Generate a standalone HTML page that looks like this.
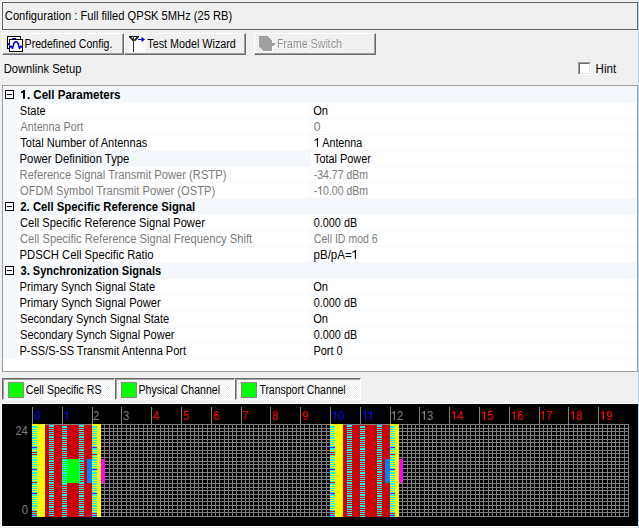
<!DOCTYPE html><html><head><meta charset="utf-8"><title>Downlink Setup</title><style>

html,body{margin:0;padding:0;background:#f0f0f0;overflow:hidden}
#r{position:relative;width:639px;height:528px;background:#f0f0f0;overflow:hidden;font-family:"Liberation Sans",sans-serif;font-size:12px;line-height:14px;color:#000}
#r div,#r span,#r svg{position:absolute;box-sizing:border-box}
.t{white-space:pre;transform-origin:0 0;height:14px}
.b{font-weight:bold}
.dis{text-shadow:1px 1px 0 #fff;will-change:transform}
.cl{letter-spacing:-0.22px}
.o{display:inline-block;width:6.67px;height:9px;background:currentColor;clip-path:polygon(3.3px 0,4.6px 0,4.6px 9px,3.3px 9px,3.3px 2.1px,0.7px 2.9px,0.7px 1.8px,3.3px 0.9px)}
.ob{clip-path:polygon(2.5px 0,4.6px 0,4.6px 9px,2.5px 9px,2.5px 2.8px,0.4px 3.4px,0.4px 1.8px,2.5px 0.9px)}
.o6{width:6.45px;clip-path:polygon(3px 0,4.3px 0,4.3px 9px,3px 9px,3px 2.1px,0.5px 2.9px,0.5px 1.8px,3px 0.9px)}
.btn{border-top:1px solid #fff;border-left:1px solid #fff;border-right:1px solid #696969;border-bottom:1px solid #696969;background:#f0f0f0}
.btn:after{content:"";position:absolute;left:0;top:0;right:0;bottom:0;border-right:1px solid #a0a0a0;border-bottom:1px solid #a0a0a0}
.tab{border-top:1px solid #696969;border-left:1px solid #696969;border-right:1px solid #fff;border-bottom:1px solid #fff;background:repeating-conic-gradient(#fff 0 25%,#f0f0f0 0 50%) 0 0/2px 2px}
.tab:after{content:"";position:absolute;left:0;top:0;right:0;bottom:0;border-top:1px solid #a0a0a0;border-left:1px solid #a0a0a0}
.sw{background:#00ff00;border:1px solid #908490;width:16px;height:16px}
.pm{width:9px;height:9px;border:1px solid #000;background:#fff}
.pm:after{content:"";position:absolute;left:1px;top:3px;width:5px;height:1px;background:#000}

</style></head><body><div id="r">
<div style="left:638px;top:0;width:1px;height:528px;background:#b9d3ee"></div>
<div style="left:2px;top:2px;width:636px;height:28px;border:1px solid #646464"></div>
<div class="btn" style="left:2px;top:33px;width:122px;height:22px"></div>
<div class="btn" style="left:124px;top:33px;width:122px;height:22px"></div>
<div class="btn" style="left:254px;top:33px;width:122px;height:22px"></div>
<svg style="left:6px;top:35px" width="18" height="18" viewBox="6 35 18 18" shape-rendering="crispEdges">
<rect x="7.5" y="36.5" width="13" height="12" fill="#fff" stroke="#000"/>
<path d="M12 38.5h4M8.5 43v2" stroke="#00f" stroke-width="1" fill="none"/>
<rect x="9.5" y="39.5" width="13" height="12" fill="#fff" stroke="#000"/>
<path d="M10.3 47.5L11.2 46.2L12.4 48.4L13.4 45.5L14 43Q16 40.6 18 43L18.6 45.5L19.6 48.4L20.8 46.2L21.7 47.5" stroke="#00f" stroke-width="1.6" fill="none" shape-rendering="auto" stroke-linejoin="round"/>
</svg>
<svg style="left:129px;top:36px" width="16" height="16" viewBox="129 36 16 16">
<rect x="129" y="36" width="16" height="16" fill="#fff"/>
<path d="M129 36.5h10" stroke="#000" stroke-width="1" shape-rendering="crispEdges"/>
<path d="M129.5 36.5l4 4.2M138.5 36.5l-4 4.2" stroke="#111" stroke-width="1.7" fill="none"/>
<path d="M133.5 36v16" stroke="#333" stroke-width="1" shape-rendering="crispEdges"/>
<path d="M138 39.5h6" stroke="#00f" stroke-width="1" shape-rendering="crispEdges"/>
<path d="M141.5 36.8l3.6 2.7l-3.6 2.7z" fill="#00f"/>
</svg>
<svg style="left:258px;top:35px" width="20" height="18" viewBox="258 35 20 18" shape-rendering="crispEdges">
<path d="M259 36h9v1h1v1h1v1h1v1h1v3h3v2h-1v1h-2v5h-9v-1h-1v-1h-1v-1h-1v-1h-1z" fill="#fff" transform="translate(1,1)"/>
<path d="M259 36h9v1h1v1h1v1h1v1h1v3h3v2h-1v1h-2v5h-9v-1h-1v-1h-1v-1h-1v-1h-1z" fill="#a0a0a0"/>
</svg>
<div style="left:578px;top:62px;width:13px;height:13px;background:#fff;border-top:1px solid #a0a0a0;border-left:1px solid #a0a0a0;border-right:1px solid #fff;border-bottom:1px solid #fff"></div>
<div style="left:579px;top:63px;width:11px;height:11px;border-top:1px solid #696969;border-left:1px solid #696969;border-right:1px solid #e3e3e3;border-bottom:1px solid #e3e3e3"></div>
<div style="left:2px;top:85px;width:636px;height:287px;border:1px solid #a0a0a0;background:#fff"></div>
<div style="left:3px;top:86px;width:14px;height:273px;background:#f4f7fc"></div>
<div style="left:3px;top:86px;width:634px;height:17px;background:#f4f7fc"></div>
<div class="pm" style="left:5px;top:90px"></div>
<div style="left:17px;top:102px;width:620px;height:1px;background:#f4f7fc"></div>
<div style="left:17px;top:118px;width:620px;height:1px;background:#f4f7fc"></div>
<div style="left:17px;top:134px;width:620px;height:1px;background:#f4f7fc"></div>
<div style="left:17px;top:150px;width:620px;height:1px;background:#f4f7fc"></div>
<div style="left:17px;top:150px;width:294px;height:17px;background:#f4f7fc"></div>
<div style="left:17px;top:166px;width:620px;height:1px;background:#f4f7fc"></div>
<div style="left:17px;top:182px;width:620px;height:1px;background:#f4f7fc"></div>
<div style="left:17px;top:198px;width:620px;height:1px;background:#f4f7fc"></div>
<div style="left:3px;top:198px;width:634px;height:17px;background:#f4f7fc"></div>
<div class="pm" style="left:5px;top:202px"></div>
<div style="left:17px;top:214px;width:620px;height:1px;background:#f4f7fc"></div>
<div style="left:17px;top:230px;width:620px;height:1px;background:#f4f7fc"></div>
<div style="left:17px;top:246px;width:620px;height:1px;background:#f4f7fc"></div>
<div style="left:17px;top:262px;width:620px;height:1px;background:#f4f7fc"></div>
<div style="left:3px;top:262px;width:634px;height:17px;background:#f4f7fc"></div>
<div class="pm" style="left:5px;top:266px"></div>
<div style="left:17px;top:278px;width:620px;height:1px;background:#f4f7fc"></div>
<div style="left:17px;top:294px;width:620px;height:1px;background:#f4f7fc"></div>
<div style="left:17px;top:310px;width:620px;height:1px;background:#f4f7fc"></div>
<div style="left:17px;top:326px;width:620px;height:1px;background:#f4f7fc"></div>
<div style="left:17px;top:342px;width:620px;height:1px;background:#f4f7fc"></div>
<div style="left:17px;top:358px;width:620px;height:1px;background:#f4f7fc"></div>
<div style="left:310px;top:86px;width:1px;height:273px;background:#f4f7fc"></div>
<div class="tab" style="left:2px;top:378px;width:113px;height:22px"></div>
<div class="tab" style="left:115px;top:378px;width:120px;height:22px"></div>
<div class="tab" style="left:235px;top:378px;width:126px;height:22px"></div>
<div style="left:1px;top:403px;width:637px;height:124px;background:#fff"></div>
<div class="sw" style="left:8px;top:382px"></div>
<div class="sw" style="left:121px;top:382px"></div>
<div class="sw" style="left:241px;top:382px"></div>
<span class="t" style="left:4px;top:8.84px;transform:translateX(0.84px) scaleX(0.9290)">Configuration : Full filled QPSK 5MHz (25 RB)</span>
<span class="t" style="left:24px;top:36.84px;transform:translateX(0.62px) scaleX(0.8823)">Predefined Config.</span>
<span class="t" style="left:147px;top:36.84px;transform:translateX(0.28px) scaleX(0.8972)">Test Model Wizard</span>
<span class="t dis" style="left:276px;top:36.84px;transform:translateX(0.91px) scaleX(0.8864);color:#8c8c8c">Frame Switch</span>
<span class="t" style="left:3px;top:61.84px;transform:translateX(0.77px) scaleX(0.9305)">Downlink Setup</span>
<span class="t" style="left:595px;top:61.84px;transform:translateX(0.54px) scaleX(0.9630)">Hint</span>
<span class="t b" style="left:20px;top:87.84px;transform:translateX(0.56px) scaleX(0.9608)"><i class="o ob"></i>. Cell Parameters</span>
<span class="t" style="left:19px;top:103.84px;transform:translateX(0.84px) scaleX(0.9185)">State</span>
<span class="t" style="left:313px;top:103.84px;transform:translateX(0.14px) scaleX(0.9288)">On</span>
<span class="t" style="left:20px;top:119.84px;transform:translateX(0.50px) scaleX(0.8957);color:#7b7b7b">Antenna Port</span>
<span class="t" style="left:313px;top:119.84px;transform:translateX(0.70px) scaleX(1.0087);color:#7b7b7b">0</span>
<span class="t" style="left:20px;top:135.84px;transform:translateX(0.27px) scaleX(0.9200)">Total Number of Antennas</span>
<span class="t" style="left:313px;top:135.84px;transform:translateX(0.93px) scaleX(0.8939)"><i class="o"></i> Antenna</span>
<span class="t" style="left:19px;top:151.84px;transform:translateX(0.56px) scaleX(0.9426)">Power Definition Type</span>
<span class="t" style="left:314px;top:151.84px;transform:translateX(0.07px) scaleX(0.9060)">Total Power</span>
<span class="t" style="left:19px;top:167.84px;transform:translateX(0.57px) scaleX(0.9312);color:#7b7b7b">Reference Signal Transmit Power (RSTP)</span>
<span class="t" style="left:313px;top:167.84px;transform:translateX(0.76px) scaleX(0.8741);color:#7b7b7b">-34.77 dBm</span>
<span class="t" style="left:20px;top:183.84px;transform:translateX(0.03px) scaleX(0.9321);color:#7b7b7b">OFDM Symbol Transmit Power (OSTP)</span>
<span class="t" style="left:313px;top:183.84px;transform:translateX(0.76px) scaleX(0.8741);color:#7b7b7b">-<i class="o"></i>0.00 dBm</span>
<span class="t b" style="left:20px;top:199.84px;transform:translateX(0.33px) scaleX(0.9429)">2. Cell Specific Reference Signal</span>
<span class="t" style="left:20px;top:215.84px;transform:translateX(0.04px) scaleX(0.9298)">Cell Specific Reference Signal Power</span>
<span class="t" style="left:313px;top:215.84px;transform:translateX(0.75px) scaleX(0.9043)">0.000 dB</span>
<span class="t" style="left:20px;top:231.84px;transform:translateX(0.03px) scaleX(0.9333);color:#7b7b7b">Cell Specific Reference Signal Frequency Shift</span>
<span class="t" style="left:313px;top:231.84px;transform:translateX(0.86px) scaleX(0.8780);color:#7b7b7b">Cell ID mod 6</span>
<span class="t" style="left:19px;top:247.84px;transform:translateX(0.56px) scaleX(0.9381)">PDSCH Cell Specific Ratio</span>
<span class="t" style="left:313px;top:247.84px;transform:translateX(0.58px) scaleX(0.9586)">pB/pA=<i class="o"></i></span>
<span class="t b" style="left:20px;top:263.84px;transform:translateX(0.57px) scaleX(0.9204)">3. Synchronization Signals</span>
<span class="t" style="left:19px;top:279.84px;transform:translateX(0.57px) scaleX(0.9280)">Primary Synch Signal State</span>
<span class="t" style="left:313px;top:279.84px;transform:translateX(0.14px) scaleX(0.9288)">On</span>
<span class="t" style="left:19px;top:295.84px;transform:translateX(0.57px) scaleX(0.9285)">Primary Synch Signal Power</span>
<span class="t" style="left:313px;top:295.84px;transform:translateX(0.75px) scaleX(0.9043)">0.000 dB</span>
<span class="t" style="left:20px;top:311.84px;transform:translateX(0.04px) scaleX(0.9203)">Secondary Synch Signal State</span>
<span class="t" style="left:313px;top:311.84px;transform:translateX(0.14px) scaleX(0.9288)">On</span>
<span class="t" style="left:20px;top:327.84px;transform:translateX(0.04px) scaleX(0.9188)">Secondary Synch Signal Power</span>
<span class="t" style="left:313px;top:327.84px;transform:translateX(0.75px) scaleX(0.9043)">0.000 dB</span>
<span class="t" style="left:19px;top:343.84px;transform:translateX(0.48px) scaleX(0.9182)">P-SS/S-SS Transmit Antenna Port</span>
<span class="t" style="left:313px;top:343.84px;transform:translateX(0.39px) scaleX(0.9148)">Port 0</span>
<span class="t" style="left:25px;top:382.84px;transform:translateX(0.76px) scaleX(0.8800)">Cell Specific RS</span>
<span class="t" style="left:138px;top:382.84px;transform:translateX(0.52px) scaleX(0.8791)">Physical Channel</span>
<span class="t" style="left:259px;top:382.84px;transform:translateX(0.38px) scaleX(0.8724)">Transport Channel</span>
<svg style="left:2px;top:404px" width="636" height="122" viewBox="2 404 636 122" shape-rendering="crispEdges"><rect x="2" y="404" width="636" height="122" fill="#000"/><path d="M32.5 424v93M36.5 424v93M41.5 424v93M45.5 424v93M49.5 424v93M53.5 424v93M58.5 424v93M62.5 424v93M66.5 424v93M70.5 424v93M75.5 424v93M79.5 424v93M83.5 424v93M87.5 424v93M92.5 424v93M96.5 424v93M100.5 424v93M104.5 424v93M109.5 424v93M113.5 424v93M117.5 424v93M121.5 424v93M126.5 424v93M130.5 424v93M134.5 424v93M138.5 424v93M143.5 424v93M147.5 424v93M151.5 424v93M155.5 424v93M160.5 424v93M164.5 424v93M168.5 424v93M172.5 424v93M177.5 424v93M181.5 424v93M185.5 424v93M190.5 424v93M194.5 424v93M198.5 424v93M202.5 424v93M207.5 424v93M211.5 424v93M215.5 424v93M219.5 424v93M224.5 424v93M228.5 424v93M232.5 424v93M236.5 424v93M241.5 424v93M245.5 424v93M249.5 424v93M253.5 424v93M258.5 424v93M262.5 424v93M266.5 424v93M270.5 424v93M275.5 424v93M279.5 424v93M283.5 424v93M287.5 424v93M292.5 424v93M296.5 424v93M300.5 424v93M304.5 424v93M309.5 424v93M313.5 424v93M317.5 424v93M321.5 424v93M326.5 424v93M330.5 424v93M334.5 424v93M339.5 424v93M343.5 424v93M347.5 424v93M351.5 424v93M356.5 424v93M360.5 424v93M364.5 424v93M368.5 424v93M373.5 424v93M377.5 424v93M381.5 424v93M385.5 424v93M390.5 424v93M394.5 424v93M398.5 424v93M402.5 424v93M407.5 424v93M411.5 424v93M415.5 424v93M419.5 424v93M424.5 424v93M428.5 424v93M432.5 424v93M436.5 424v93M441.5 424v93M445.5 424v93M449.5 424v93M453.5 424v93M458.5 424v93M462.5 424v93M466.5 424v93M470.5 424v93M475.5 424v93M479.5 424v93M483.5 424v93M488.5 424v93M492.5 424v93M496.5 424v93M500.5 424v93M505.5 424v93M509.5 424v93M513.5 424v93M517.5 424v93M522.5 424v93M526.5 424v93M530.5 424v93M534.5 424v93M539.5 424v93M543.5 424v93M547.5 424v93M551.5 424v93M556.5 424v93M560.5 424v93M564.5 424v93M568.5 424v93M573.5 424v93M577.5 424v93M581.5 424v93M585.5 424v93M590.5 424v93M594.5 424v93M598.5 424v93M602.5 424v93M607.5 424v93M611.5 424v93M615.5 424v93M619.5 424v93M624.5 424v93M628.5 424v93M32 516.5h597M32 512.5h597M32 509.5h597M32 505.5h597M32 501.5h597M32 498.5h597M32 494.5h597M32 490.5h597M32 487.5h597M32 483.5h597M32 479.5h597M32 476.5h597M32 472.5h597M32 468.5h597M32 464.5h597M32 461.5h597M32 457.5h597M32 453.5h597M32 450.5h597M32 446.5h597M32 442.5h597M32 439.5h597M32 435.5h597M32 431.5h597M32 428.5h597M32 424.5h597M32.5 407v17M62.5 407v17M92.5 407v17M121.5 407v17M151.5 407v17M181.5 407v17M211.5 407v17M241.5 407v17M270.5 407v17M300.5 407v17M330.5 407v17M360.5 407v17M390.5 407v17M419.5 407v17M449.5 407v17M479.5 407v17M509.5 407v17M539.5 407v17M568.5 407v17M598.5 407v17" stroke="#808080" stroke-width="1" fill="none"/><rect x="32" y="424" width="13" height="93" fill="#ffff00"/><rect x="45" y="425" width="48" height="92" fill="#cc0000"/><rect x="62" y="459" width="18" height="24" fill="#00ff00"/><rect x="87" y="459" width="6" height="24" fill="#0080ff"/><rect x="100" y="459" width="5" height="24" fill="#ff00ff"/><rect x="92" y="424" width="9" height="93" fill="#ffff00"/><path d="M32 516.5h5M32 514.5h5M32 512.5h5M32 510.5h5M32 508.5h5M32 506.5h5M32 505.5h5M32 503.5h5M32 501.5h5M32 499.5h5M32 497.5h5M32 495.5h5M32 494.5h5M32 492.5h5M32 490.5h5M32 488.5h5M32 486.5h5M32 484.5h5M32 483.5h5M32 481.5h5M32 479.5h5M32 477.5h5M32 475.5h5M32 473.5h5M32 472.5h5M32 470.5h5M32 468.5h5M32 466.5h5M32 464.5h5M32 462.5h5M32 460.5h5M32 459.5h5M32 457.5h5M32 455.5h5M32 453.5h5M32 451.5h5M32 449.5h5M32 448.5h5M32 446.5h5M32 444.5h5M32 442.5h5M32 440.5h5M32 438.5h5M32 437.5h5M32 435.5h5M32 433.5h5M32 431.5h5M32 429.5h5M32 427.5h5M32 426.5h5" stroke="#00ffff" stroke-width="1" fill="none"/><path d="M49 515.5h5M49 513.5h5M49 511.5h5M49 509.5h5M49 507.5h5M49 506.5h5M49 504.5h5M49 502.5h5M49 500.5h5M49 498.5h5M49 496.5h5M49 495.5h5M49 493.5h5M49 491.5h5M49 489.5h5M49 487.5h5M49 485.5h5M49 483.5h5M49 482.5h5M49 480.5h5M49 478.5h5M49 476.5h5M49 474.5h5M49 472.5h5M49 471.5h5M49 469.5h5M49 467.5h5M49 465.5h5M49 463.5h5M49 461.5h5M49 460.5h5M49 458.5h5M49 456.5h5M49 454.5h5M49 452.5h5M49 450.5h5M49 449.5h5M49 447.5h5M49 445.5h5M49 443.5h5M49 441.5h5M49 439.5h5M49 437.5h5M49 436.5h5M49 434.5h5M49 432.5h5M49 430.5h5M49 428.5h5M49 426.5h5M49 425.5h5" stroke="#00ffff" stroke-width="1" fill="none"/><path d="M62 516.5h5M62 514.5h5M62 512.5h5M62 510.5h5M62 508.5h5M62 506.5h5M62 505.5h5M62 503.5h5M62 501.5h5M62 499.5h5M62 497.5h5M62 495.5h5M62 494.5h5M62 492.5h5M62 490.5h5M62 488.5h5M62 486.5h5M62 484.5h5M62 483.5h5M62 481.5h5M62 479.5h5M62 477.5h5M62 475.5h5M62 473.5h5M62 472.5h5M62 470.5h5M62 468.5h5M62 466.5h5M62 464.5h5M62 462.5h5M62 460.5h5M62 459.5h5M62 457.5h5M62 455.5h5M62 453.5h5M62 451.5h5M62 449.5h5M62 448.5h5M62 446.5h5M62 444.5h5M62 442.5h5M62 440.5h5M62 438.5h5M62 437.5h5M62 435.5h5M62 433.5h5M62 431.5h5M62 429.5h5M62 427.5h5M62 426.5h5" stroke="#00ffff" stroke-width="1" fill="none"/><path d="M79 515.5h5M79 513.5h5M79 511.5h5M79 509.5h5M79 507.5h5M79 506.5h5M79 504.5h5M79 502.5h5M79 500.5h5M79 498.5h5M79 496.5h5M79 495.5h5M79 493.5h5M79 491.5h5M79 489.5h5M79 487.5h5M79 485.5h5M79 483.5h5M79 482.5h5M79 480.5h5M79 478.5h5M79 476.5h5M79 474.5h5M79 472.5h5M79 471.5h5M79 469.5h5M79 467.5h5M79 465.5h5M79 463.5h5M79 461.5h5M79 460.5h5M79 458.5h5M79 456.5h5M79 454.5h5M79 452.5h5M79 450.5h5M79 449.5h5M79 447.5h5M79 445.5h5M79 443.5h5M79 441.5h5M79 439.5h5M79 437.5h5M79 436.5h5M79 434.5h5M79 432.5h5M79 430.5h5M79 428.5h5M79 426.5h5M79 425.5h5" stroke="#00ffff" stroke-width="1" fill="none"/><path d="M92 516.5h5M92 514.5h5M92 512.5h5M92 510.5h5M92 508.5h5M92 506.5h5M92 505.5h5M92 503.5h5M92 501.5h5M92 499.5h5M92 497.5h5M92 495.5h5M92 494.5h5M92 492.5h5M92 490.5h5M92 488.5h5M92 486.5h5M92 484.5h5M92 483.5h5M92 481.5h5M92 479.5h5M92 477.5h5M92 475.5h5M92 473.5h5M92 472.5h5M92 470.5h5M92 468.5h5M92 466.5h5M92 464.5h5M92 462.5h5M92 460.5h5M92 459.5h5M92 457.5h5M92 455.5h5M92 453.5h5M92 451.5h5M92 449.5h5M92 448.5h5M92 446.5h5M92 444.5h5M92 442.5h5M92 440.5h5M92 438.5h5M92 437.5h5M92 435.5h5M92 433.5h5M92 431.5h5M92 429.5h5M92 427.5h5M92 426.5h5" stroke="#00ffff" stroke-width="1" fill="none"/><path d="M32 447.5h5M32 469.5h5M32 493.5h5M32 515.5h5" stroke="#8000ff" stroke-width="1" fill="none"/><path d="M32 452.5h5M32 454.5h5M32 482.5h5M32 511.5h5M32 513.5h5" stroke="#ff0000" stroke-width="1" fill="none"/><path d="M92 447.5h5M92 469.5h5M92 493.5h5M92 515.5h5" stroke="#8000ff" stroke-width="1" fill="none"/><path d="M92 454.5h5M92 513.5h5" stroke="#ff0000" stroke-width="1" fill="none"/><rect x="330" y="424" width="13" height="93" fill="#ffff00"/><rect x="343" y="425" width="48" height="92" fill="#cc0000"/><rect x="385" y="459" width="6" height="24" fill="#0080ff"/><rect x="398" y="459" width="5" height="24" fill="#ff00ff"/><rect x="390" y="424" width="9" height="93" fill="#ffff00"/><path d="M330 516.5h5M330 514.5h5M330 512.5h5M330 510.5h5M330 508.5h5M330 506.5h5M330 505.5h5M330 503.5h5M330 501.5h5M330 499.5h5M330 497.5h5M330 495.5h5M330 494.5h5M330 492.5h5M330 490.5h5M330 488.5h5M330 486.5h5M330 484.5h5M330 483.5h5M330 481.5h5M330 479.5h5M330 477.5h5M330 475.5h5M330 473.5h5M330 472.5h5M330 470.5h5M330 468.5h5M330 466.5h5M330 464.5h5M330 462.5h5M330 460.5h5M330 459.5h5M330 457.5h5M330 455.5h5M330 453.5h5M330 451.5h5M330 449.5h5M330 448.5h5M330 446.5h5M330 444.5h5M330 442.5h5M330 440.5h5M330 438.5h5M330 437.5h5M330 435.5h5M330 433.5h5M330 431.5h5M330 429.5h5M330 427.5h5M330 426.5h5" stroke="#00ffff" stroke-width="1" fill="none"/><path d="M347 515.5h5M347 513.5h5M347 511.5h5M347 509.5h5M347 507.5h5M347 506.5h5M347 504.5h5M347 502.5h5M347 500.5h5M347 498.5h5M347 496.5h5M347 495.5h5M347 493.5h5M347 491.5h5M347 489.5h5M347 487.5h5M347 485.5h5M347 483.5h5M347 482.5h5M347 480.5h5M347 478.5h5M347 476.5h5M347 474.5h5M347 472.5h5M347 471.5h5M347 469.5h5M347 467.5h5M347 465.5h5M347 463.5h5M347 461.5h5M347 460.5h5M347 458.5h5M347 456.5h5M347 454.5h5M347 452.5h5M347 450.5h5M347 449.5h5M347 447.5h5M347 445.5h5M347 443.5h5M347 441.5h5M347 439.5h5M347 437.5h5M347 436.5h5M347 434.5h5M347 432.5h5M347 430.5h5M347 428.5h5M347 426.5h5M347 425.5h5" stroke="#00ffff" stroke-width="1" fill="none"/><path d="M360 516.5h5M360 514.5h5M360 512.5h5M360 510.5h5M360 508.5h5M360 506.5h5M360 505.5h5M360 503.5h5M360 501.5h5M360 499.5h5M360 497.5h5M360 495.5h5M360 494.5h5M360 492.5h5M360 490.5h5M360 488.5h5M360 486.5h5M360 484.5h5M360 483.5h5M360 481.5h5M360 479.5h5M360 477.5h5M360 475.5h5M360 473.5h5M360 472.5h5M360 470.5h5M360 468.5h5M360 466.5h5M360 464.5h5M360 462.5h5M360 460.5h5M360 459.5h5M360 457.5h5M360 455.5h5M360 453.5h5M360 451.5h5M360 449.5h5M360 448.5h5M360 446.5h5M360 444.5h5M360 442.5h5M360 440.5h5M360 438.5h5M360 437.5h5M360 435.5h5M360 433.5h5M360 431.5h5M360 429.5h5M360 427.5h5M360 426.5h5" stroke="#00ffff" stroke-width="1" fill="none"/><path d="M377 515.5h5M377 513.5h5M377 511.5h5M377 509.5h5M377 507.5h5M377 506.5h5M377 504.5h5M377 502.5h5M377 500.5h5M377 498.5h5M377 496.5h5M377 495.5h5M377 493.5h5M377 491.5h5M377 489.5h5M377 487.5h5M377 485.5h5M377 483.5h5M377 482.5h5M377 480.5h5M377 478.5h5M377 476.5h5M377 474.5h5M377 472.5h5M377 471.5h5M377 469.5h5M377 467.5h5M377 465.5h5M377 463.5h5M377 461.5h5M377 460.5h5M377 458.5h5M377 456.5h5M377 454.5h5M377 452.5h5M377 450.5h5M377 449.5h5M377 447.5h5M377 445.5h5M377 443.5h5M377 441.5h5M377 439.5h5M377 437.5h5M377 436.5h5M377 434.5h5M377 432.5h5M377 430.5h5M377 428.5h5M377 426.5h5M377 425.5h5" stroke="#00ffff" stroke-width="1" fill="none"/><path d="M390 516.5h5M390 514.5h5M390 512.5h5M390 510.5h5M390 508.5h5M390 506.5h5M390 505.5h5M390 503.5h5M390 501.5h5M390 499.5h5M390 497.5h5M390 495.5h5M390 494.5h5M390 492.5h5M390 490.5h5M390 488.5h5M390 486.5h5M390 484.5h5M390 483.5h5M390 481.5h5M390 479.5h5M390 477.5h5M390 475.5h5M390 473.5h5M390 472.5h5M390 470.5h5M390 468.5h5M390 466.5h5M390 464.5h5M390 462.5h5M390 460.5h5M390 459.5h5M390 457.5h5M390 455.5h5M390 453.5h5M390 451.5h5M390 449.5h5M390 448.5h5M390 446.5h5M390 444.5h5M390 442.5h5M390 440.5h5M390 438.5h5M390 437.5h5M390 435.5h5M390 433.5h5M390 431.5h5M390 429.5h5M390 427.5h5M390 426.5h5" stroke="#00ffff" stroke-width="1" fill="none"/><path d="M330 447.5h5M330 469.5h5M330 493.5h5M330 515.5h5" stroke="#8000ff" stroke-width="1" fill="none"/><path d="M330 452.5h5M330 454.5h5M330 482.5h5M330 511.5h5M330 513.5h5" stroke="#ff0000" stroke-width="1" fill="none"/><path d="M390 447.5h5M390 469.5h5M390 493.5h5M390 515.5h5" stroke="#8000ff" stroke-width="1" fill="none"/><path d="M390 454.5h5M390 513.5h5" stroke="#ff0000" stroke-width="1" fill="none"/></svg>
<span class="t cl" style="left:34px;top:408.84px;transform:scaleX(0.93);color:#0000ff">0</span>
<span class="t cl" style="left:64px;top:408.84px;transform:scaleX(0.93);color:#0000ff"><i class="o o6"></i></span>
<span class="t cl" style="left:93px;top:408.84px;transform:scaleX(0.93);color:#808080">2</span>
<span class="t cl" style="left:123px;top:408.84px;transform:scaleX(0.93);color:#808080">3</span>
<span class="t cl" style="left:153px;top:408.84px;transform:scaleX(0.93);color:#ff0000">4</span>
<span class="t cl" style="left:183px;top:408.84px;transform:scaleX(0.93);color:#ff0000">5</span>
<span class="t cl" style="left:213px;top:408.84px;transform:scaleX(0.93);color:#ff0000">6</span>
<span class="t cl" style="left:242px;top:408.84px;transform:scaleX(0.93);color:#ff0000">7</span>
<span class="t cl" style="left:272px;top:408.84px;transform:scaleX(0.93);color:#ff0000">8</span>
<span class="t cl" style="left:302px;top:408.84px;transform:scaleX(0.93);color:#ff0000">9</span>
<span class="t cl" style="left:332px;top:408.84px;transform:scaleX(0.93);color:#0000ff"><i class="o o6"></i>0</span>
<span class="t cl" style="left:362px;top:408.84px;transform:scaleX(0.93);color:#0000ff"><i class="o o6"></i><i class="o o6"></i></span>
<span class="t cl" style="left:391px;top:408.84px;transform:scaleX(0.93);color:#808080"><i class="o o6"></i>2</span>
<span class="t cl" style="left:421px;top:408.84px;transform:scaleX(0.93);color:#808080"><i class="o o6"></i>3</span>
<span class="t cl" style="left:451px;top:408.84px;transform:scaleX(0.93);color:#ff0000"><i class="o o6"></i>4</span>
<span class="t cl" style="left:481px;top:408.84px;transform:scaleX(0.93);color:#ff0000"><i class="o o6"></i>5</span>
<span class="t cl" style="left:511px;top:408.84px;transform:scaleX(0.93);color:#ff0000"><i class="o o6"></i>6</span>
<span class="t cl" style="left:540px;top:408.84px;transform:scaleX(0.93);color:#ff0000"><i class="o o6"></i>7</span>
<span class="t cl" style="left:570px;top:408.84px;transform:scaleX(0.93);color:#ff0000"><i class="o o6"></i>8</span>
<span class="t cl" style="left:600px;top:408.84px;transform:scaleX(0.93);color:#ff0000"><i class="o o6"></i>9</span>
<span class="t cl" style="left:-2px;width:30px;text-align:right;top:423.84px;transform-origin:100% 0;transform:translateX(-0.40px) scaleX(0.93);color:#808080">24</span>
<span class="t cl" style="left:-2px;width:30px;text-align:right;top:502.84px;transform-origin:100% 0;transform:translateX(-0.30px) scaleX(0.93);color:#808080">0</span>
</div></body></html>
